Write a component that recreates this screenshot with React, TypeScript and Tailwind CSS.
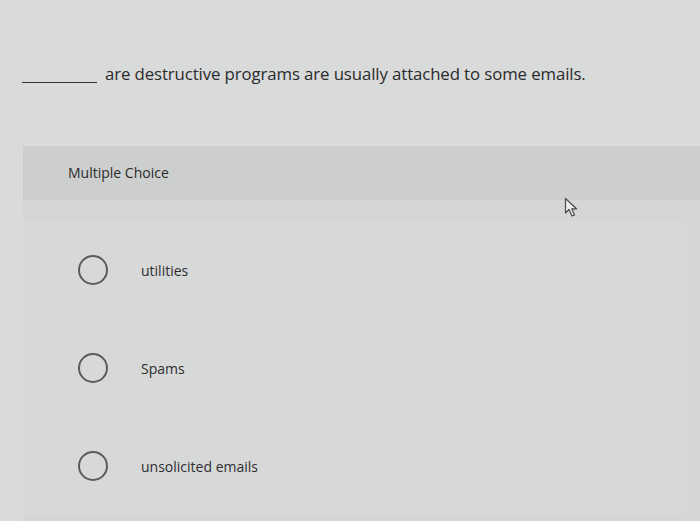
import React from "react";

const options = ["utilities", "Spams", "unsolicited emails"];

function Radio() {
  return (
    <span className="block w-[30px] h-[30px] rounded-full border-2 border-[#5a5b5b] shrink-0" />
  );
}

export default function App() {
  return (
    <div
      className="w-[700px] h-[521px] overflow-hidden bg-[#d9dada] flex flex-col"
      style={{ fontFamily: '"Open Sans", "Liberation Sans", sans-serif' }}
    >
      <div className="h-[146px] shrink-0 pt-[64px] pl-[22px] flex items-start">
        <span className="inline-block w-[75px] border-b border-[#333] h-[19px] mr-[8px] shrink-0" />
        <span className="text-[16.8px] leading-[20px] text-[#2a2b2c] tracking-[-0.1px] whitespace-nowrap">
          are destructive programs are usually attached to some emails.
        </span>
      </div>
      <div className="ml-[23px] flex-1 bg-[#d5d6d6] flex flex-col">
        <div className="h-[54px] shrink-0 bg-[#cdcece] pl-[45px] pt-[16px] text-[14px] text-[#2b2c2c]">
          Multiple Choice
        </div>
        <div className="relative flex-1 flex flex-col pt-[21px]">
          <svg
            className="absolute left-[541px] top-[-3px]"
            width="18"
            height="22"
            viewBox="0 0 18 22"
          >
            <path
              d="M1.5 1.5 L1.5 16 L5 12.5 L8 19 L10.5 18 L7.8 11.8 L12.5 11.8 Z"
              fill="#eceded"
              stroke="#4a4b4b"
              strokeWidth="1.2"
              strokeLinejoin="round"
            />
          </svg>
          {options.map((o) => (
            <div
              key={o}
              className="h-[98px] shrink-0 flex items-center pl-[55px] mr-[14px] bg-[#d7d8d8]"
            >
              <Radio />
              <span className="ml-[33px] text-[14px] text-[#2e2f30]">{o}</span>
            </div>
          ))}
        </div>
      </div>
    </div>
  );
}
